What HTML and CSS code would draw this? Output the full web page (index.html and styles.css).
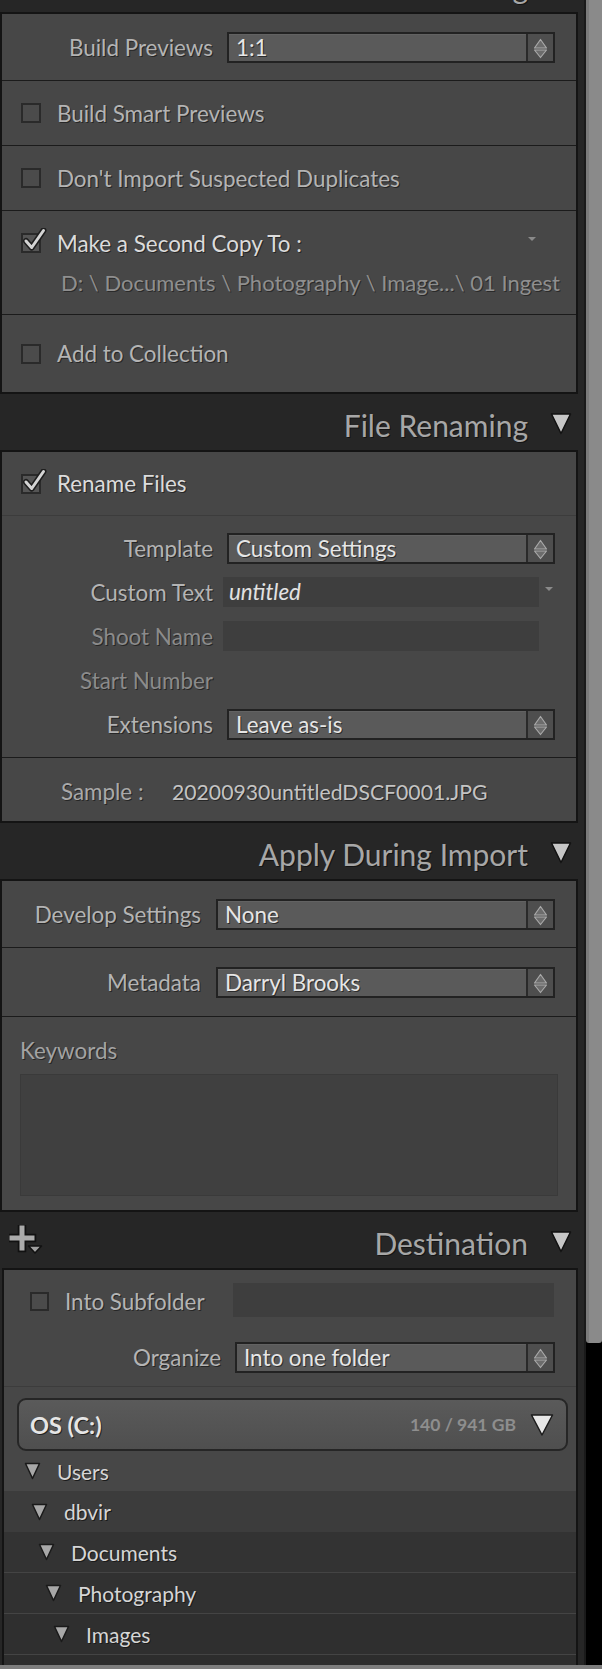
FILE: index.html
```html
<!DOCTYPE html>
<html lang="en">

<head>
  <meta charset="UTF-8">
  <meta name="viewport" content="width=device-width, initial-scale=1.0">
  <title>Import Settings</title>
  <link rel="stylesheet" href="styles.css">
</head>

<body>
  <div class="screen">
    <div class="main">
      <div class="side">

        <!-- file handling (scrolled, only the bottom is visible) -->
        <div class="head head-cut">
          <span class="head-title">File Handling</span>
          <svg class="head-tri" width="22" height="23" viewBox="0 0 22 23"><path d="M1.5 2 L20.5 2 L11 21.5 Z" /></svg>
        </div>
        <div class="panel panel-handling">
          <div class="row row-build">
            <span class="lbl lbl-a">Build Previews</span>
            <div class="select sel-a">
              <span class="select-val">1:1</span>
              <span class="stepper"><svg width="25" height="27" viewBox="0 0 25 27"><path d="M6.5 14 L12.5 5.5 L18.5 14 Z" /><path d="M6.5 16 L12.5 23.5 L18.5 16 Z" /></svg></span>
            </div>
          </div>
          <div class="row row-check">
            <span class="check"></span>
            <span class="check-lbl">Build Smart Previews</span>
          </div>
          <div class="row row-check">
            <span class="check"></span>
            <span class="check-lbl">Don't Import Suspected Duplicates</span>
          </div>
          <div class="row row-copy">
            <div class="copy-line">
              <span class="check checked"><svg class="tick" width="28" height="28" viewBox="0 0 28 28"><path class="tick-out" d="M5 13 L10.7 19.5 L22.5 2.5" /><path class="tick-in" d="M5 13 L10.7 19.5 L22.5 2.5" /></svg></span>
              <span class="check-lbl on">Make a Second Copy To :</span>
              <span class="mini-drop"></span>
            </div>
            <div class="copy-path">D: \ Documents \ Photography \ Image...\ 01 Ingest</div>
          </div>
          <div class="row row-check row-last">
            <span class="check"></span>
            <span class="check-lbl">Add to Collection</span>
          </div>
        </div>

        <!-- file renaming -->
        <div class="head">
          <span class="head-title">File Renaming</span>
          <svg class="head-tri" width="22" height="23" viewBox="0 0 22 23"><path d="M1.5 2 L20.5 2 L11 21.5 Z" /></svg>
        </div>
        <div class="panel">
          <div class="row row-rename">
            <span class="check checked"><svg class="tick" width="28" height="28" viewBox="0 0 28 28"><path class="tick-out" d="M5 13 L10.7 19.5 L22.5 2.5" /><path class="tick-in" d="M5 13 L10.7 19.5 L22.5 2.5" /></svg></span>
            <span class="check-lbl on">Rename Files</span>
          </div>
          <div class="fields">
            <div class="field">
              <span class="lbl lbl-a">Template</span>
              <div class="select sel-a">
                <span class="select-val">Custom Settings</span>
                <span class="stepper"><svg width="25" height="27" viewBox="0 0 25 27"><path d="M6.5 14 L12.5 5.5 L18.5 14 Z" /><path d="M6.5 16 L12.5 23.5 L18.5 16 Z" /></svg></span>
              </div>
            </div>
            <div class="field">
              <span class="lbl lbl-a">Custom Text</span>
              <div class="text-box"><em>untitled</em></div>
              <span class="mini-drop"></span>
            </div>
            <div class="field">
              <span class="lbl lbl-a dim">Shoot Name</span>
              <div class="text-box"></div>
            </div>
            <div class="field">
              <span class="lbl lbl-a dim">Start Number</span>
            </div>
            <div class="field">
              <span class="lbl lbl-a">Extensions</span>
              <div class="select sel-a">
                <span class="select-val">Leave as-is</span>
                <span class="stepper"><svg width="25" height="27" viewBox="0 0 25 27"><path d="M6.5 14 L12.5 5.5 L18.5 14 Z" /><path d="M6.5 16 L12.5 23.5 L18.5 16 Z" /></svg></span>
              </div>
            </div>
          </div>
          <div class="sample">
            <span class="sample-lbl">Sample :</span>
            <span class="sample-val">20200930untitledDSCF0001.JPG</span>
          </div>
        </div>

        <!-- apply during import -->
        <div class="head">
          <span class="head-title">Apply During Import</span>
          <svg class="head-tri" width="22" height="23" viewBox="0 0 22 23"><path d="M1.5 2 L20.5 2 L11 21.5 Z" /></svg>
        </div>
        <div class="panel">
          <div class="row row-develop">
            <span class="lbl lbl-b">Develop Settings</span>
            <div class="select sel-b">
              <span class="select-val">None</span>
              <span class="stepper"><svg width="25" height="27" viewBox="0 0 25 27"><path d="M6.5 14 L12.5 5.5 L18.5 14 Z" /><path d="M6.5 16 L12.5 23.5 L18.5 16 Z" /></svg></span>
            </div>
          </div>
          <div class="row row-meta">
            <span class="lbl lbl-b">Metadata</span>
            <div class="select sel-b">
              <span class="select-val">Darryl Brooks</span>
              <span class="stepper"><svg width="25" height="27" viewBox="0 0 25 27"><path d="M6.5 14 L12.5 5.5 L18.5 14 Z" /><path d="M6.5 16 L12.5 23.5 L18.5 16 Z" /></svg></span>
            </div>
          </div>
          <div class="keywords">
            <div class="kw-lbl">Keywords</div>
            <div class="kw-box"></div>
          </div>
        </div>

        <!-- destination -->
        <div class="head head-dest">
          <svg class="plus" width="36" height="30" viewBox="0 0 36 30">
            <path class="plus-out" d="M13 3 V23 M3 13 H23" />
            <path class="plus-in" d="M13 3 V23 M3 13 H23" />
            <path class="plus-tri" d="M19.5 21 L32.5 21 L26 28 Z" />
          </svg>
          <span class="head-right">
            <span class="head-title">Destination</span>
            <svg class="head-tri" width="22" height="23" viewBox="0 0 22 23"><path d="M1.5 2 L20.5 2 L11 21.5 Z" /></svg>
          </span>
        </div>
        <div class="panel panel-dest">
          <div class="dest-sub">
            <span class="check"></span>
            <span class="check-lbl">Into Subfolder</span>
            <div class="text-box sub-box"></div>
          </div>
          <div class="dest-org">
            <span class="lbl lbl-c">Organize</span>
            <div class="select sel-c">
              <span class="select-val">Into one folder</span>
              <span class="stepper"><svg width="25" height="27" viewBox="0 0 25 27"><path d="M6.5 14 L12.5 5.5 L18.5 14 Z" /><path d="M6.5 16 L12.5 23.5 L18.5 16 Z" /></svg></span>
            </div>
          </div>
          <div class="volume-wrap">
            <div class="volume">
              <span class="vol-name">OS (C:)</span>
              <span class="vol-size">140 / 941 GB</span>
              <svg class="vol-tri" width="24" height="24" viewBox="0 0 24 24"><path d="M1.5 2 L22.5 2 L12 22 Z" /></svg>
            </div>
          </div>
          <div class="tree">
            <div class="node n0"><svg class="node-tri" width="17" height="18" viewBox="0 0 17 18"><path d="M1.5 1.5 L15.5 1.5 L8.5 16.5 Z" /></svg><span>Users</span></div>
            <div class="node n1"><svg class="node-tri" width="17" height="18" viewBox="0 0 17 18"><path d="M1.5 1.5 L15.5 1.5 L8.5 16.5 Z" /></svg><span>dbvir</span></div>
            <div class="node n2"><svg class="node-tri" width="17" height="18" viewBox="0 0 17 18"><path d="M1.5 1.5 L15.5 1.5 L8.5 16.5 Z" /></svg><span>Documents</span></div>
            <div class="node n3"><svg class="node-tri" width="17" height="18" viewBox="0 0 17 18"><path d="M1.5 1.5 L15.5 1.5 L8.5 16.5 Z" /></svg><span>Photography</span></div>
            <div class="node n4"><svg class="node-tri" width="17" height="18" viewBox="0 0 17 18"><path d="M1.5 1.5 L15.5 1.5 L8.5 16.5 Z" /></svg><span>Images</span></div>
            <div class="node n5"><svg class="node-tri" width="17" height="18" viewBox="0 0 17 18"><path d="M1.5 1.5 L15.5 1.5 L8.5 16.5 Z" /></svg></div>
          </div>
        </div>

      </div>
      <div class="scroll">
        <div class="thumb"></div>
      </div>
    </div>
    <div class="hbar"></div>
  </div>
</body>

</html>
```

FILE: styles.css
```css
* {
  margin: 0;
  padding: 0;
  box-sizing: border-box;
}

body {
  background-color: #262626;
  font-family: Lato, "Open Sans", sans-serif;
  font-size: 22.4px;
  color: #b4b4b4;
}

.screen {
  width: 602px;
  height: 1669px;
  display: flex;
  flex-direction: column;
  overflow: hidden;
}

.main {
  flex: 1;
  display: flex;
  overflow: hidden;
}

.side {
  width: 584px;
  flex-shrink: 0;
}

.scroll {
  flex: 1;
  background-color: #000;
  border-left: 2px solid #1a1a1a;
}

.thumb {
  height: 1343px;
  background-color: #8a8a8a;
  border-left: 3px solid #7b7b7b;
  border-radius: 0 0 3px 3px;
}

.hbar {
  height: 4px;
  background-color: #7e7e7e;
}

/* section headers */
.head {
  height: 56px;
  display: flex;
  align-items: center;
  justify-content: flex-end;
  gap: 22px;
  padding: 6px 12px 0 0;
}

.head-cut {
  margin-top: -44px;
}

.head-title {
  font-size: 30px;
  color: #a7a7a7;
  text-shadow: 1px 1px 0 #141414;
}

.head-tri {
  margin-top: -4px;
}

.head-tri path {
  fill: #c6c6c6;
  stroke: #111;
  stroke-width: 1.5;
  stroke-linejoin: round;
}

.head-dest {
  justify-content: space-between;
  padding-left: 9px;
}

.head-right {
  display: flex;
  align-items: center;
  gap: 22px;
}

.plus {
  margin-top: -6px;
}

.plus-out {
  fill: none;
  stroke: #111;
  stroke-width: 8.5;
  stroke-linecap: square;
}

.plus-in {
  fill: none;
  stroke: #ababab;
  stroke-width: 5;
  stroke-linecap: square;
}

.plus-tri {
  fill: #a0a0a0;
  stroke: #111;
  stroke-width: 1.5;
  stroke-linejoin: round;
}

/* panels */
.panel {
  width: 578px;
  background-color: #474747;
  border: 2px solid #141414;
}

.panel-dest {
  width: 576px;
  margin-left: 2px;
}

.row {
  display: flex;
  align-items: center;
  border-bottom: 1px solid #1b1b1b;
}

.row-last {
  border-bottom: none;
}

.row-build {
  height: 67px;
  gap: 14px;
}

.row-check {
  height: 65px;
  padding-left: 19px;
}

.row-check:last-child {
  height: 77px;
}

.lbl {
  text-align: right;
  text-shadow: 1px 1px 0 #262626;
  flex-shrink: 0;
}

.lbl-a {
  width: 211px;
}

.lbl-b {
  width: 199px;
}

.lbl-c {
  width: 217px;
}

.dim {
  color: #8b8b8b;
}

/* selects */
.select {
  display: flex;
  height: 31px;
  border: 2px solid #222;
  background-color: #5a5a5a;
  box-shadow: inset 0 1px 0 #626262;
}

.sel-a {
  width: 328px;
}

.sel-b {
  width: 339px;
}

.sel-c {
  width: 320px;
}

.select-val {
  flex: 1;
  padding-left: 7px;
  line-height: 27px;
  color: #e6e6e6;
  text-shadow: 1px 1px 0 #2c2c2c;
}

.stepper {
  width: 27px;
  border-left: 2px solid #2a2a2a;
  background-color: #4e4e4e;
}

.stepper svg {
  display: block;
}

.stepper path {
  fill: #6c6c6c;
  stroke: #a9a9a9;
  stroke-width: 1.2;
  stroke-linejoin: round;
}

/* checkboxes */
.check {
  position: relative;
  width: 20px;
  height: 20px;
  flex-shrink: 0;
  border: 2px solid #2a2a2a;
  background-color: #4b4b4b;
}

.checked {
  background-color: #555;
}

.tick {
  position: absolute;
  left: -2px;
  top: -7px;
}

.tick-out {
  fill: none;
  stroke: #1e1e1e;
  stroke-width: 6;
  stroke-linejoin: round;
  stroke-linecap: round;
}

.tick-in {
  fill: none;
  stroke: #d4d4d4;
  stroke-width: 3;
  stroke-linejoin: round;
  stroke-linecap: round;
}

.check-lbl {
  margin-left: 16px;
  text-shadow: 1px 1px 0 #262626;
}

.check-lbl.on {
  color: #dcdcdc;
}

.mini-drop {
  width: 0;
  height: 0;
  border-left: 4px solid transparent;
  border-right: 4px solid transparent;
  border-top: 4px solid #8a8a8a;
}

/* second copy */
.row-copy {
  height: 104px;
  flex-direction: column;
  align-items: stretch;
  padding: 20px 0 0 19px;
}

.copy-line {
  display: flex;
  align-items: center;
  height: 24px;
}

.copy-line .mini-drop {
  margin-left: auto;
  margin-right: 40px;
  margin-top: -8px;
}

.copy-path {
  margin: 16px 0 0 40px;
  line-height: 24px;
  font-size: 22px;
  color: #8f8f8f;
  text-shadow: 1px 1px 0 #2a2a2a;
  white-space: nowrap;
}

/* renaming */
.row-rename {
  height: 64px;
  padding-left: 19px;
  border-bottom: 1px solid #3c3c3c;
}

.fields {
  padding: 10px 0 11px;
}

.field {
  display: flex;
  align-items: center;
  height: 44px;
  gap: 14px;
}

.text-box {
  height: 30px;
  width: 316px;
  margin-left: -4px;
  padding-left: 6px;
  background-color: #3e3e3e;
  line-height: 30px;
  color: #e2e2e2;
}

.field .mini-drop {
  margin-left: -8px;
  margin-top: -6px;
}

.sample {
  height: 64px;
  display: flex;
  align-items: center;
  padding: 4px 0 0 59px;
  border-top: 1px solid #1b1b1b;
}

.sample-lbl {
  width: 111px;
  color: #a9a9a9;
  text-shadow: 1px 1px 0 #262626;
}

.sample-val {
  font-size: 21.2px;
  color: #c4c4c4;
  text-shadow: 1px 1px 0 #262626;
}

/* apply during import */
.row-develop {
  height: 67px;
  gap: 15px;
}

.row-meta {
  height: 69px;
  gap: 15px;
}

.keywords {
  height: 193px;
  padding: 22px 18px 0 18px;
}

.kw-lbl {
  line-height: 24px;
  color: #a3a3a3;
  text-shadow: 1px 1px 0 #262626;
}

.kw-box {
  margin-top: 11px;
  height: 122px;
  background-color: #404040;
  border: 1px solid #3a3a3a;
}

/* destination */
.dest-sub {
  height: 60px;
  display: flex;
  align-items: center;
  padding: 2px 0 0 26px;
}

.dest-sub .check {
  width: 19px;
  height: 19px;
}

.dest-sub .check-lbl {
  width: 168px;
}

.sub-box {
  width: 321px;
  height: 34px;
  margin-left: 0;
  margin-top: -3px;
}

.dest-org {
  height: 57px;
  display: flex;
  align-items: center;
  gap: 14px;
  padding-bottom: 1px;
  border-bottom: 1px solid #3c3c3c;
}

.volume-wrap {
  padding: 11px 8px 0 13px;
}

.volume {
  height: 53px;
  display: flex;
  align-items: center;
  padding: 0 12px 0 11px;
  border: 2px solid #262626;
  border-radius: 9px;
  background: linear-gradient(#5a5a5a, #4f4f4f);
}

.vol-name {
  font-size: 23.5px;
  font-weight: bold;
  color: #e6e6e6;
  text-shadow: 1px 1px 0 #222;
}

.vol-size {
  margin-left: auto;
  font-size: 17.5px;
  color: #8e8e8e;
  font-weight: bold;
}

.vol-tri {
  margin-left: 14px;
}

.vol-tri path {
  fill: #e8e8e8;
  stroke: #1c1c1c;
  stroke-width: 1.5;
  stroke-linejoin: round;
}

/* folder tree */
.node {
  height: 41px;
  display: flex;
  align-items: center;
  gap: 16px;
  font-size: 21px;
  color: #d6d6d6;
  text-shadow: 1px 1px 0 #1a1a1a;
  border-bottom: 1px solid #444;
}

.node-tri path {
  fill: #a8a8a8;
  stroke: #1a1a1a;
  stroke-width: 1.5;
  stroke-linejoin: round;
}

.n0 {
  height: 40px;
  padding-left: 20px;
  background-color: #474747;
  border-bottom: none;
}

.n1 {
  padding-left: 27px;
  background-color: #3c3c3c;
  border-bottom: none;
}

.n2 {
  padding-left: 34px;
  background-color: #333;
}

.n3 {
  padding-left: 41px;
  background-color: #313131;
}

.n4 {
  padding-left: 49px;
  background-color: #2f2f2f;
}

.n5 {
  padding-left: 56px;
  background-color: #2d2d2d;
}
```
